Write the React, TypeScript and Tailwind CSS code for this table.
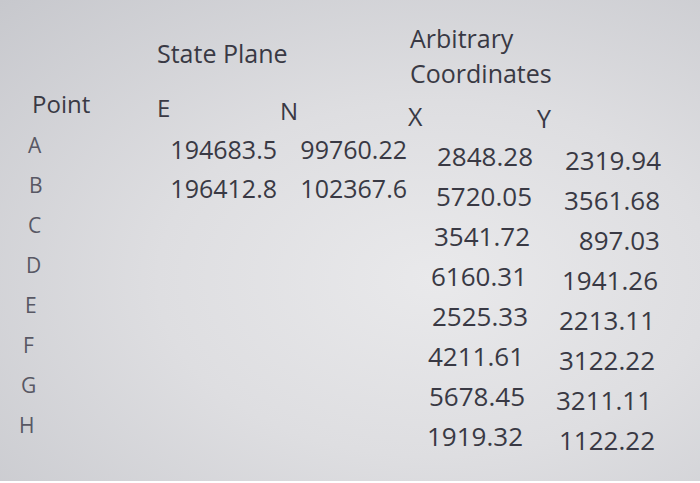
const letters = [
  { p: "A", cls: "pl-[28px]" },
  { p: "B", cls: "pl-[29px]" },
  { p: "C", cls: "pl-[28px]" },
  { p: "D", cls: "pl-[26px]" },
  { p: "E", cls: "pl-[25px]" },
  { p: "F", cls: "pl-[23px]" },
  { p: "G", cls: "pl-[21px]" },
  { p: "H", cls: "pl-[19px]" },
]

const stateE = ["194683.5", "196412.8"]
const stateN = ["99760.22", "102367.6"]

const arbX = [
  { v: "2848.28", cls: "pr-[2px]" },
  { v: "5720.05", cls: "pr-[3px]" },
  { v: "3541.72", cls: "pr-[5px]" },
  { v: "6160.31", cls: "pr-[8px]" },
  { v: "2525.33", cls: "pr-[7px]" },
  { v: "4211.61", cls: "pr-[11px]" },
  { v: "5678.45", cls: "pr-[10px]" },
  { v: "1919.32", cls: "pr-[12px]" },
]

const arbY = [
  { v: "2319.94", cls: "pr-[1px]" },
  { v: "3561.68", cls: "pr-[2px]" },
  { v: "897.03", cls: "pr-[2px]" },
  { v: "1941.26", cls: "pr-[4px]" },
  { v: "2213.11", cls: "pr-[7px]" },
  { v: "3122.22", cls: "pr-[7px]" },
  { v: "3211.11", cls: "pr-[10px]" },
  { v: "1122.22", cls: "pr-[7px]" },
]

export default function App() {
  return (
    <div className="w-[700px] h-[483px] bg-white overflow-hidden" style={{ fontFamily: '"Open Sans", sans-serif' }}>
      <div className="h-[481px] flex bg-[radial-gradient(ellipse_at_62%_58%,#e9e9eb_0%,#dedee1_45%,#c7c8cd_100%)] text-[#393944]">
        {/* point column */}
        <div className="w-[157px] flex flex-col pt-[84px]">
          <div className="pl-[32px] text-[24px] leading-[40px]">Point</div>
          <div className="mt-[1px]">
            {letters.map((l) => (
              <div key={l.p} className={`${l.cls} text-[21px] leading-[40px] text-[#585864]`}>
                {l.p}
              </div>
            ))}
          </div>
        </div>

        {/* state plane */}
        <div className="w-[251px] flex flex-col">
          <div className="mt-[33px] text-[25px] leading-[40px]">State Plane</div>
          <div className="flex mt-[15px]">
            <div className="w-[123px] flex flex-col">
              <div className="text-[24px] leading-[40px]">E</div>
              <div className="mt-[2px]">
                {stateE.map((v) => (
                  <div key={v} className="text-right pr-[3px] text-[25px] leading-[39px]">{v}</div>
                ))}
              </div>
            </div>
            <div className="w-[128px] flex flex-col mt-[3px]">
              <div className="text-[24px] leading-[40px]">N</div>
              <div className="-mt-[1px]">
                {stateN.map((v) => (
                  <div key={v} className="text-right pr-[1px] text-[25px] leading-[39px]">{v}</div>
                ))}
              </div>
            </div>
          </div>
        </div>

        {/* arbitrary coordinates */}
        <div className="w-[257px] flex flex-col">
          <div className="mt-[21px] pl-[2px] text-[25px] leading-[35px]">
            Arbitrary
            <br />
            Coordinates
          </div>
          <div className="flex mt-[5px]">
            <div className="w-[127px] flex flex-col">
              <div className="text-[25px] leading-[40px]">X</div>
              <div>
                {arbX.map((r) => (
                  <div key={r.v} className={`text-right ${r.cls} text-[26px] leading-[40px]`}>{r.v}</div>
                ))}
              </div>
            </div>
            <div className="w-[127px] flex flex-col mt-[2px]">
              <div className="pl-[2px] text-[25px] leading-[40px]">Y</div>
              <div className="mt-[2px]">
                {arbY.map((r) => (
                  <div key={r.v} className={`text-right ${r.cls} text-[26px] leading-[40px]`}>{r.v}</div>
                ))}
              </div>
            </div>
          </div>
        </div>
      </div>
    </div>
  )
}
